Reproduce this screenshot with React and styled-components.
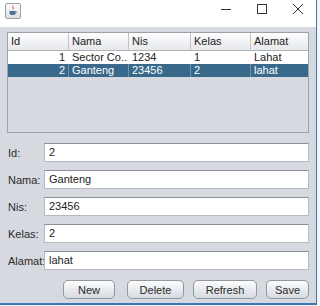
import React from 'react';
import styled, { createGlobalStyle } from 'styled-components';

const Global = createGlobalStyle`
    html, body {
        margin: 0;
        padding: 0;
        background: #f3f4f6;
        font-family: "Liberation Sans", Arial, sans-serif;
        font-size: 11px;
        color: #1b1b1b;
    }
`;

const Window = styled.div`
    width: 316px;
    height: 303px;
    background: #d6d9df;
    border-right: 1px solid #3c78b4;
    border-bottom: 2px solid #3c78b4;
    display: flex;
    flex-direction: column;
`;

const TitleBar = styled.div`
    height: 27px;
    background: #ffffff;
    display: flex;
    align-items: center;
    padding-left: 5px;
`;

const AppIcon = styled.div`
    width: 14px;
    height: 14px;
    border: 1px solid #9aa3ad;
    border-radius: 2px;
    background: linear-gradient(#fafafa, #dcdfe3);
    display: flex;
    align-items: center;
    justify-content: center;
    margin-top: -6px;
`;

const Controls = styled.div`
    margin-left: auto;
    display: flex;
    height: 100%;
`;

const Control = styled.div`
    width: 36px;
    height: 100%;
    display: flex;
    align-items: center;
    justify-content: center;
    margin-top: -5px;
`;

const Content = styled.div`
    flex: 1;
    padding: 5px 7px 0 7px;
    display: flex;
    flex-direction: column;
`;

const TablePane = styled.div`
    height: 99px;
    border: 1px solid #9aa1aa;
    background: #d6d9df;
    display: flex;
    flex-direction: column;
`;

const Row = styled.div`
    display: grid;
    grid-template-columns: 61px 60px 62px 60px 1fr;
    height: ${p => (p.header ? 17 : 13)}px;
    background: ${p => (p.header ? 'linear-gradient(#fdfdfd, #e6e8eb)' : p.selected ? '#39698a' : '#ffffff')};
    color: ${p => (p.selected ? '#ffffff' : '#222')};
    border-bottom: ${p => (p.header ? '1px solid #aeb3ba' : 'none')};
`;

const Cell = styled.div`
    padding: 0 3px;
    line-height: ${p => (p.header ? 17 : 13)}px;
    white-space: nowrap;
    overflow: hidden;
    text-align: ${p => (p.right ? 'right' : 'left')};
    border-right: 1px solid ${p => (p.header ? '#bfc4ca' : p.selected ? '#6f93ad' : 'transparent')};
    &:last-child {
        border-right: none;
    }
`;

const Form = styled.div`
    margin-top: 10px;
    display: grid;
    grid-template-columns: 37px 1fr;
    row-gap: 8px;
    align-items: center;
`;

const Label = styled.label`
    padding-left: 1px;
    color: #2a2a2a;
    white-space: nowrap;
`;

const Field = styled.div`
    height: 17px;
    background: #ffffff;
    border: 1px solid #b6bbc2;
    border-top-color: #8a9099;
    padding-left: 4px;
    line-height: 17px;
    color: #222;
`;

const Buttons = styled.div`
    margin-top: 10px;
    display: flex;
    justify-content: flex-end;
    gap: 9px;
`;

const Button = styled.div`
    box-sizing: border-box;
    width: ${p => p.w}px;
    height: 19px;
    margin-right: ${p => p.after || 0}px;
    border: 1px solid #8f979f;
    border-radius: 5px;
    background: linear-gradient(#fdfdfd, #e4e7eb 60%, #d7dbe0);
    display: flex;
    align-items: center;
    justify-content: center;
    color: #2a2a2a;
`;

const columns = ['Id', 'Nama', 'Nis', 'Kelas', 'Alamat'];
const data = [
    ['1', 'Sector Co...', '1234', '1', 'Lahat'],
    ['2', 'Ganteng', '23456', '2', 'lahat'],
];
const fields = [
    ['Id:', '2'],
    ['Nama:', 'Ganteng'],
    ['Nis:', '23456'],
    ['Kelas:', '2'],
    ['Alamat:', 'lahat'],
];

export default function App() {
    return (
        <>
            <Global />
            <Window>
                <TitleBar>
                    <AppIcon>
                        <svg width="10" height="11" viewBox="0 0 10 11">
                            <path d="M5 0.5 C3.5 2 6.5 3 5 4.5" stroke="#d9541e" fill="none" strokeWidth="1" />
                            <path d="M1.5 6 H7.5 V8 Q7.5 10 5.5 10 H3.5 Q1.5 10 1.5 8 Z" fill="#4d6f9c" />
                            <path d="M7.5 6.5 Q9.5 6.8 7.5 8.5" stroke="#4d6f9c" fill="none" />
                        </svg>
                    </AppIcon>
                    <Controls>
                        <Control>
                            <svg width="10" height="10" viewBox="0 0 10 10">
                                <path d="M0 5.5 H10" stroke="#333" strokeWidth="1" />
                            </svg>
                        </Control>
                        <Control>
                            <svg width="10" height="10" viewBox="0 0 10 10">
                                <rect x="0.5" y="0.5" width="9" height="9" stroke="#333" fill="none" />
                            </svg>
                        </Control>
                        <Control>
                            <svg width="10" height="10" viewBox="0 0 10 10">
                                <path d="M0 0 L10 10 M10 0 L0 10" stroke="#333" strokeWidth="1" />
                            </svg>
                        </Control>
                    </Controls>
                </TitleBar>
                <Content>
                    <TablePane>
                        <Row header>
                            {columns.map(c => (
                                <Cell header key={c}>{c}</Cell>
                            ))}
                        </Row>
                        {data.map((r, i) => (
                            <Row key={i} selected={i === 1}>
                                {r.map((v, j) => (
                                    <Cell key={j} right={j === 0} selected={i === 1}>{v}</Cell>
                                ))}
                            </Row>
                        ))}
                    </TablePane>
                    <Form>
                        {fields.map(([l, v]) => (
                            <React.Fragment key={l}>
                                <Label>{l}</Label>
                                <Field>{v}</Field>
                            </React.Fragment>
                        ))}
                    </Form>
                    <Buttons>
                        <Button w={52} after={3}>New</Button>
                        <Button w={57}>Delete</Button>
                        <Button w={64}>Refresh</Button>
                        <Button w={43}>Save</Button>
                    </Buttons>
                </Content>
            </Window>
        </>
    );
}
